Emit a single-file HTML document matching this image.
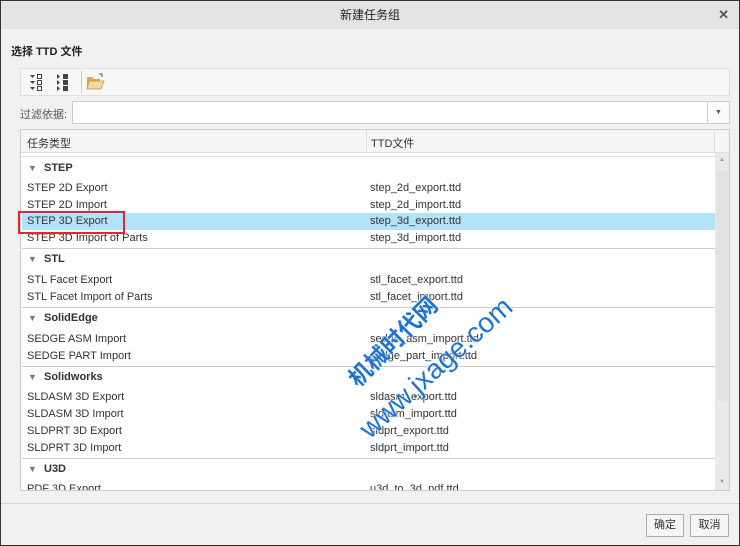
<!DOCTYPE html><html><head><meta charset="utf-8"><style>
body{margin:0;width:740px;height:546px;overflow:hidden;font-family:"Liberation Sans","Noto Sans CJK SC",sans-serif;font-size:11px;color:#333}
.win{position:absolute;left:0;top:0;width:738px;height:544px;border:1px solid #333;background:#f0f1f2}
.a{position:absolute}
.title{left:0;top:0;width:738px;height:28px;background:#e2e4e5;text-align:center;line-height:28px;font-size:12px;color:#222}
.row{position:absolute;left:1px;width:693px;height:17px;line-height:17px}
.row span{position:absolute;left:5px}
.row b{position:absolute;left:348px;font-weight:normal}
.grp{position:absolute;left:1px;width:693px;border-top:1px solid #ccc;height:21px;line-height:21px;font-weight:bold}
.grp i{position:absolute;left:6px;font-style:normal;color:#777;font-size:9px;font-weight:normal}
.grp span{position:absolute;left:22px}
.btn{position:absolute;top:513px;height:21px;border:1px solid #adadad;background:#f5f5f5;line-height:21px;text-align:center;font-size:11px}
.wm{color:#1e73d2;text-shadow:0 0 2px #fff,0 0 2px #fff;white-space:nowrap}
</style></head><body><div class="win">
<div class="a title">新建任务组<span style="position:absolute;right:10px;font-weight:bold;font-size:13px;color:#555">✕</span></div>
<div class="a" style="left:10px;top:42px;font-weight:bold;font-size:11px;color:#222">选择 TTD 文件</div>
<div class="a" style="left:19px;top:67px;width:708px;height:26px;background:#f7f7f7;border:1px solid #ddd">
 <svg class="a" style="left:8px;top:4px" width="16" height="18"><g fill="#444"><path d="M1 2h5l-2.5 3z M1 8h5l-2.5 3z M1 14h5l-2.5 3z"/></g><g fill="none" stroke="#444"><rect x="8.5" y="1.5" width="4" height="4"/><rect x="8.5" y="7.5" width="4" height="4"/><rect x="8.5" y="13.5" width="4" height="4"/></g></svg>
 <svg class="a" style="left:34px;top:4px" width="16" height="18"><g fill="#444"><path d="M2 1v5l3-2.5z M2 7v5l3-2.5z M2 13v5l3-2.5z"/><rect x="8" y="1" width="5" height="5"/><rect x="8" y="7" width="5" height="5"/><rect x="8" y="13" width="5" height="5"/></g></svg>
 <div class="a" style="left:60px;top:2px;width:1px;height:22px;background:#ccc"></div>
 <svg class="a" style="left:64px;top:3px" width="20" height="20"><path d="M2 5h5l2 2h6v10H2z" fill="#d9a84e"/><path d="M4 9h15l-3 8H2z" fill="#f3d9a0" stroke="#c9913a" stroke-width=".8"/><path d="M14 2h3v3" fill="none" stroke="#555"/></svg>
</div>
<div class="a" style="left:19px;top:105px;color:#555">过滤依据:</div>
<div class="a" style="left:71px;top:100px;width:634px;height:21px;background:#fff;border:1px solid #ccc"></div>
<div class="a" style="left:706px;top:100px;width:21px;height:21px;background:#fafafa;border:1px solid #ccc;text-align:center;line-height:21px;font-size:7px;color:#555">▼</div>
<div class="a" style="left:19px;top:128px;width:708px;height:360px;background:#fff;border:1px solid #ccc;overflow:hidden">
 <div class="a" style="left:0;top:0;width:708px;height:22px;background:#f5f5f5;border-bottom:1px solid #ddd"></div>
 <div class="a" style="left:6px;top:5px;color:#333">任务类型</div>
 <div class="a" style="left:345px;top:0;width:1px;height:22px;background:#ddd"></div>
 <div class="a" style="left:350px;top:5px">TTD文件</div>
 <div class="a" style="left:693px;top:0;width:1px;height:22px;background:#ddd"></div>
 <div class="a" style="left:0;top:22px;width:694px;height:4px;border-bottom:1px solid #ddd"></div>
 <div class="a" style="left:694px;top:23px;width:14px;height:337px;background:#eaeaea"></div>
 <div class="a" style="left:694px;top:23px;width:14px;height:14px;font-size:6px;color:#999;text-align:center;line-height:14px">▲</div>
 <div class="a" style="left:695px;top:40px;width:12px;height:231px;background:#e2e2e2"></div>
 <div class="a" style="left:694px;top:345px;width:14px;height:14px;font-size:6px;color:#999;text-align:center;line-height:14px">▼</div>
 <div class="grp" style="top:28px;border-top:none"><i>▼</i><span>STEP</span></div>
 <div class="row" style="top:50px"><span>STEP 2D Export</span><b>step_2d_export.ttd</b></div>
 <div class="row" style="top:67px"><span>STEP 2D Import</span><b>step_2d_import.ttd</b></div>
 <div class="row" style="top:83px;background:#b3e2fb"><span>STEP 3D Export</span><b>step_3d_export.ttd</b></div>
 <div class="row" style="top:100px"><span>STEP 3D Import of Parts</span><b>step_3d_import.ttd</b></div>
 <div class="grp" style="top:118px"><i>▼</i><span>STL</span></div>
 <div class="row" style="top:142px"><span>STL Facet Export</span><b>stl_facet_export.ttd</b></div>
 <div class="row" style="top:159px"><span>STL Facet Import of Parts</span><b>stl_facet_import.ttd</b></div>
 <div class="grp" style="top:177px"><i>▼</i><span>SolidEdge</span></div>
 <div class="row" style="top:201px"><span>SEDGE ASM Import</span><b>sedge_asm_import.ttd</b></div>
 <div class="row" style="top:218px"><span>SEDGE PART Import</span><b>sedge_part_import.ttd</b></div>
 <div class="grp" style="top:236px"><i>▼</i><span>Solidworks</span></div>
 <div class="row" style="top:259px"><span>SLDASM 3D Export</span><b>sldasm_export.ttd</b></div>
 <div class="row" style="top:276px"><span>SLDASM 3D Import</span><b>sldasm_import.ttd</b></div>
 <div class="row" style="top:293px"><span>SLDPRT 3D Export</span><b>sldprt_export.ttd</b></div>
 <div class="row" style="top:310px"><span>SLDPRT 3D Import</span><b>sldprt_import.ttd</b></div>
 <div class="grp" style="top:328px"><i>▼</i><span>U3D</span></div>
 <div class="row" style="top:351px"><span>PDF 3D Export</span><b>u3d_to_3d_pdf.ttd</b></div>
</div>
<div class="a" style="left:17px;top:210px;width:103px;height:19px;border:2px solid #e8262a"></div>
<div class="a wm" style="left:338px;top:368px;transform:rotate(-45deg);transform-origin:left top;font-size:23px;font-weight:bold">机械时代网</div>
<div class="a wm" style="left:352px;top:420px;transform:rotate(-42deg);transform-origin:left top;font-size:28px">www.jxage.com</div>
<div class="a" style="left:0;top:502px;width:738px;height:1px;background:#d5d5d5"></div>
<div class="btn" style="left:645px;width:36px">确定</div>
<div class="btn" style="left:689px;width:37px">取消</div>
</div></body></html>
